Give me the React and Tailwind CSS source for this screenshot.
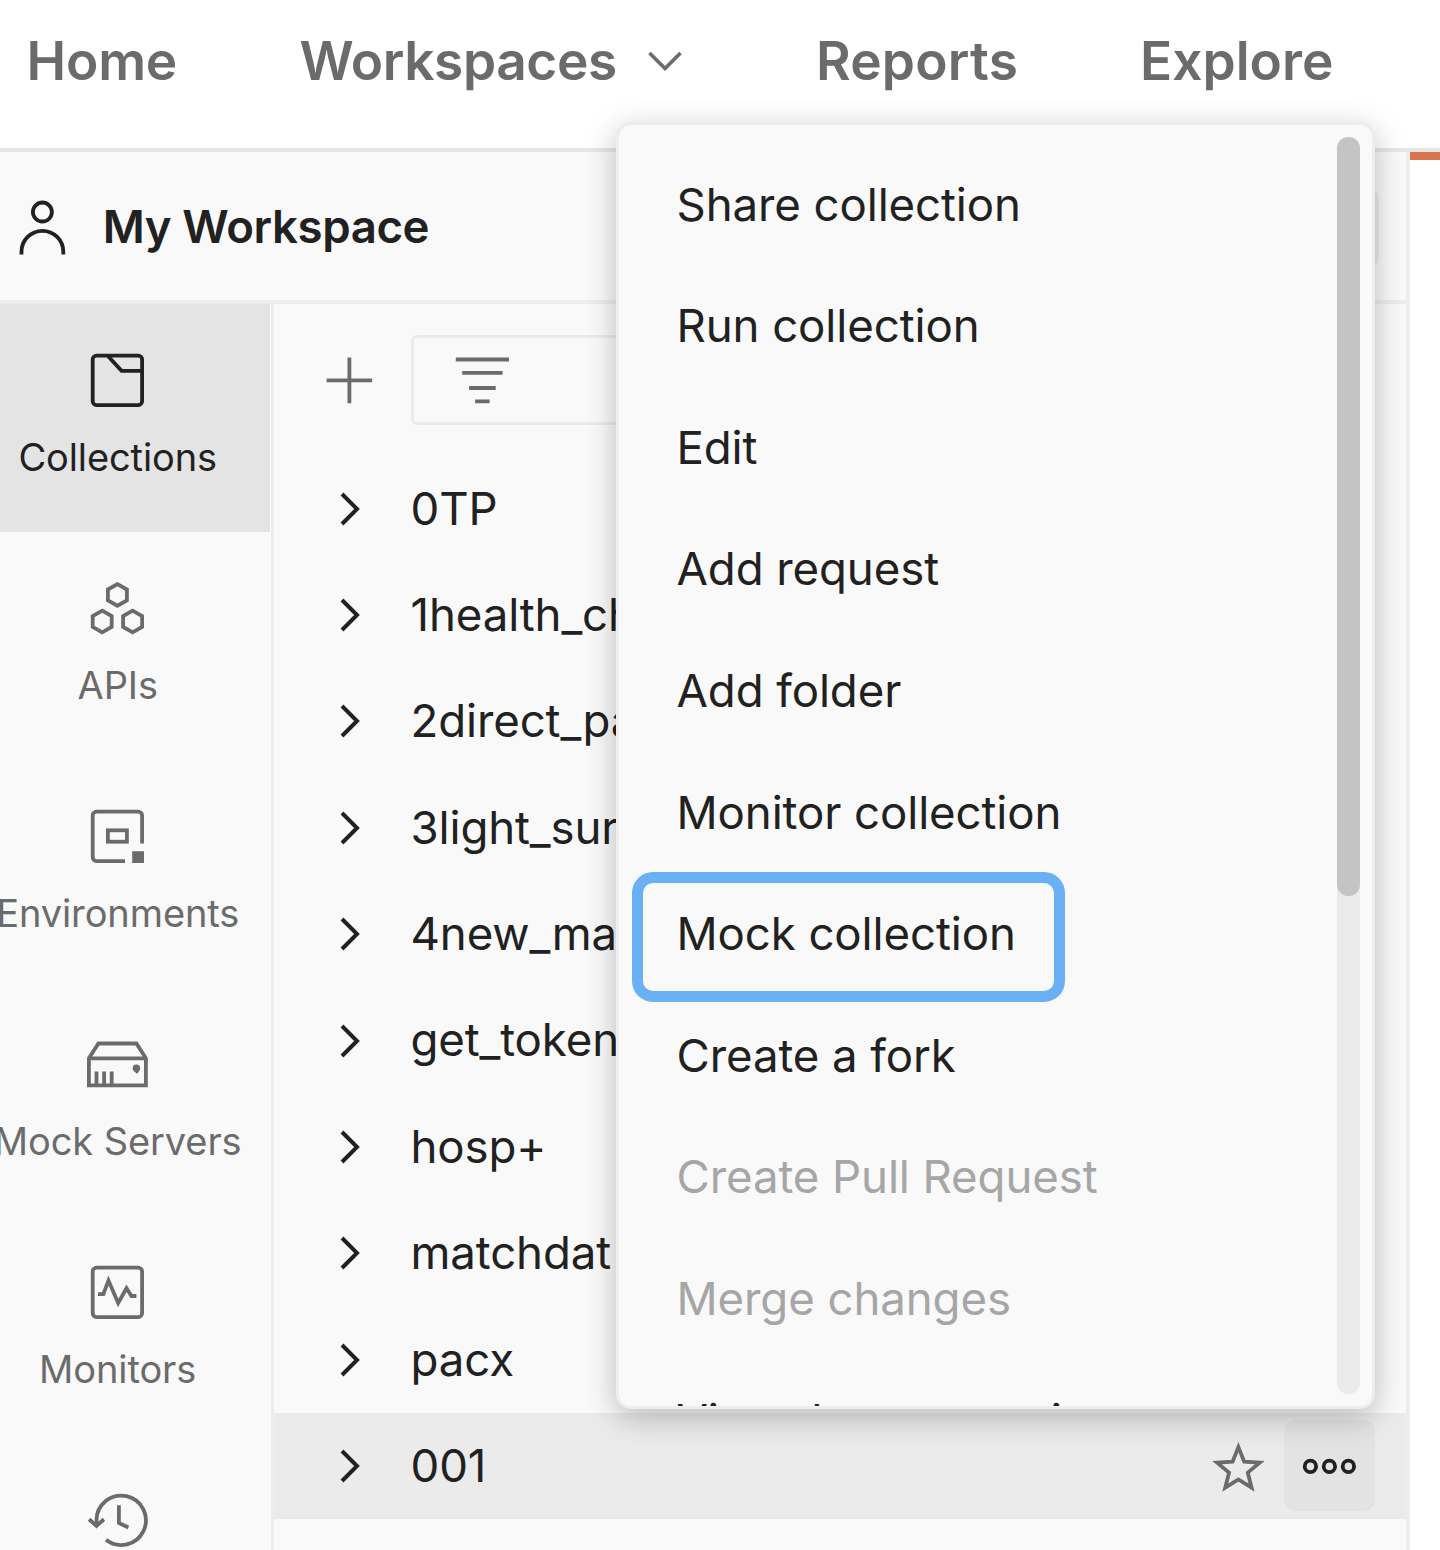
import React from 'react'

const hex = (cx, cy) =>
  `M${cx} ${cy - 2.85}l2.5 1.42v2.86l-2.5 1.42l-2.5 -1.42v-2.86z`

const starPoints = Array.from({ length: 10 }, (_, i) => {
  const r = i % 2 ? 2.6 : 5.9
  const a = (Math.PI / 5) * i
  return `${(8 + r * Math.sin(a)).toFixed(2)},${(9.1 - r * Math.cos(a)).toFixed(2)}`
}).join(' ')

function Icon({ children, className = '' }) {
  return (
    <svg viewBox="0 0 16 16" fill="none" stroke="currentColor"
      className={`size-[60.8px] shrink-0 overflow-visible ${className}`}>
      {children}
    </svg>
  )
}

const navItems = [
  {
    label: 'Collections',
    active: true,
    icon: (
      <>
        <rect x="1.5" y="1.5" width="13" height="13" rx="1" />
        <path d="M5.5 1.6L9.1 5.5H14.5" />
      </>
    ),
  },
  {
    label: 'APIs',
    icon: <path d={hex(8, 4.45) + hex(4, 11.45) + hex(12, 11.45)} />,
  },
  {
    label: 'Environments',
    icon: (
      <>
        <path d="M14.5 9.9V2.5a1 1 0 0 0 -1 -1H2.5a1 1 0 0 0 -1 1v11a1 1 0 0 0 1 1h7.5" />
        <rect x="5.5" y="6.4" width="5" height="3" />
        <rect x="11.9" y="11.9" width="3.1" height="3.1" fill="currentColor" stroke="none" />
      </>
    ),
  },
  {
    label: 'Mock Servers',
    icon: (
      <>
        <path d="M.5 6.4L3 2.5h10l2.5 3.9v7.1H.5zM.5 6.4h15M2.5 9.9v3.6M4.5 9.9v3.6M6.5 9.9v3.6" />
        <path d="M13 8a1 1 0 0 1 1 1c0 .6-.4 .8-.7 1.4h-.3c-.1-.4-1-.6-1-1.4a1 1 0 0 1 1-1z" fill="currentColor" stroke="none" />
      </>
    ),
  },
  {
    label: 'Monitors',
    icon: (
      <>
        <rect x="1.5" y="1.5" width="13" height="13" rx="1" />
        <path d="M2.9 8.45H4.3L5.65 4.9L8.2 10.8L10.4 6.9L11.7 8.95H13" />
      </>
    ),
  },
  {
    label: 'History',
    icon: (
      <>
        <path d="M2.5 9.2V8a6.5 6.5 0 1 1 2.5 5.1" />
        <path d="M.55 7.7L2.5 9.45L4.45 7.7M8.4 4v4.7L10.9 9.85" />
      </>
    ),
  },
]

const collections = [
  '0TP',
  '1health_check',
  '2direct_pay',
  '3light_sur',
  '4new_ma',
  'get_token',
  'hosp+',
  'matchdat',
  'pacx',
  '001',
]

const menuItems = [
  { label: 'Share collection' },
  { label: 'Run collection' },
  { label: 'Edit' },
  { label: 'Add request' },
  { label: 'Add folder' },
  { label: 'Monitor collection' },
  { label: 'Mock collection', highlighted: true },
  { label: 'Create a fork' },
  { label: 'Create Pull Request', disabled: true },
  { label: 'Merge changes', disabled: true },
  { label: 'View documentation' },
]

function TopNav() {
  return (
    <header className="flex h-[152px] shrink-0 items-start border-b-4 border-[#e6e6e6] bg-white pt-[29px] pl-[26.5px] text-[53.2px] leading-[64px] font-semibold text-[#6b6b6b]">
      <span className="w-[273px] tracking-[-0.2px]">Home</span>
      <span className="flex w-[516.5px] items-center tracking-[-0.4px]">
        Workspaces
        <svg viewBox="0 0 34 20" fill="none" stroke="currentColor" strokeWidth="3.6" className="ml-[31px] h-5 w-[34px]">
          <path d="M1.5 2L17 17.5L32.5 2" />
        </svg>
      </span>
      <span className="w-[324px] tracking-[0.2px]">Reports</span>
      <span>Explore</span>
    </header>
  )
}

function SideNav() {
  return (
    <nav className="w-[273.5px] shrink-0 overflow-hidden border-r-[3.8px] border-[#ededed]">
      {navItems.map(item => (
        <div key={item.label}
          className={`-ml-[34.6px] flex h-[228px] w-[304.6px] flex-col items-center pt-[45.5px] ${item.active ? 'bg-[#e4e4e4] text-[#212121]' : 'text-[#6b6b6b]'}`}>
          <Icon>{item.icon}</Icon>
          <span className="mt-6 text-[38px] leading-[46px] tracking-[-0.1px] whitespace-nowrap">{item.label}</span>
        </div>
      ))}
    </nav>
  )
}

function CollectionRow({ name, selected }) {
  return (
    <div className={`flex h-[106.4px] items-center pl-[66px] ${selected ? 'bg-[#ebebeb]' : ''}`}>
      <svg viewBox="0 0 20 34" fill="none" stroke="currentColor" strokeWidth="4" className="mt-px h-[34px] w-5 shrink-0">
        <path d="M2 2L17 17L2 32" />
      </svg>
      <span className="mt-px ml-[51px] text-[45.6px] tracking-[-0.12px] whitespace-nowrap">{name}</span>
      {selected && (
        <div className="ml-auto flex items-center pr-[31px]">
          <Icon className="mr-[15px] text-[#6b6b6b]"><polygon points={starPoints} /></Icon>
          <div className="flex size-[91px] items-center justify-center rounded-xl bg-[#e3e3e3]">
            <Icon className="mt-px">
              <circle cx="3" cy="8" r="1.5" />
              <circle cx="8" cy="8" r="1.5" />
              <circle cx="13" cy="8" r="1.5" />
            </Icon>
          </div>
        </div>
      )}
    </div>
  )
}

function ContextMenu() {
  return (
    <div className="absolute top-[122px] left-[616px] flex h-[1287px] w-[759px] overflow-hidden rounded-[15px] border-3 border-[#ededed] bg-[#f9f9f9] shadow-[0_8px_30px_rgba(0,0,0,0.25)]">
      <div className="flex-1 pt-[19px] pl-[57.5px]">
        {menuItems.map(item => (
          <div key={item.label}
            className={`relative flex h-[121.6px] items-center text-[45.6px] tracking-[-0.1px] whitespace-nowrap ${item.disabled ? 'text-[#a6a6a6]' : ''}`}>
            {item.label}
            {item.highlighted && (
              <div className="absolute -top-[2px] -left-[45px] h-[130.5px] w-[433px] rounded-[21px] border-[11.5px] border-[#69b0f4]" />
            )}
          </div>
        ))}
      </div>
      <div className="mt-3 mr-3 h-[1257px] w-[23px] shrink-0 rounded-full bg-[#ebebeb]">
        <div className="h-[759px] rounded-full bg-[#c4c4c4]" />
      </div>
    </div>
  )
}

export default function App() {
  return (
    <div className="relative flex h-[1550px] w-[1440px] flex-col overflow-hidden bg-white font-['Inter',sans-serif] text-[#212121]">
      <TopNav />
      <div className="flex min-h-0 flex-1">
        <aside className="flex w-[1410px] shrink-0 flex-col border-r-4 border-[#ededed] bg-[#f9f9f9]">
          <div className="flex h-[152px] shrink-0 items-center border-b-4 border-[#ededed] pt-[3px] pr-[27px] pl-[11.5px]">
            <Icon><path d="M2.5 15.1V14.4a5.5 5.5 0 0 1 11 0v.7" /><circle cx="8" cy="3.95" r="2.5" /></Icon>
            <span className="ml-[30.5px] text-[45.6px] font-semibold tracking-[-0.4px]">My Workspace</span>
            <div className="ml-auto h-20 w-[180px] rounded-xl border-4 border-[#ebebeb]" />
          </div>

          <div className="flex min-h-0 flex-1">
            <SideNav />
            <div className="flex flex-1 flex-col">
              {/* Toolbar */}
              <div className="flex h-[151px] shrink-0 items-start pt-[31px] pl-[45.5px]">
                <Icon className="mt-[14.5px] text-[#6b6b6b]"><path d="M2 8h12M8 2v12" /></Icon>
                <div className="ml-[31px] flex h-[90px] w-[700px] items-center rounded-md border-[3px] border-[#ebebeb] pl-[38px]">
                  <Icon className="text-[#6b6b6b]"><path d="M1 2.5h14M2.7 6h10.6M4.5 10h7M6.1 13.5h3.8" /></Icon>
                </div>
              </div>
              {collections.map(name => (
                <CollectionRow key={name} name={name} selected={name === '001'} />
              ))}
            </div>
          </div>
        </aside>
        <main className="flex-1 border-t-8 border-[#d4754d] bg-white" />
      </div>
      <ContextMenu />
    </div>
  )
}
